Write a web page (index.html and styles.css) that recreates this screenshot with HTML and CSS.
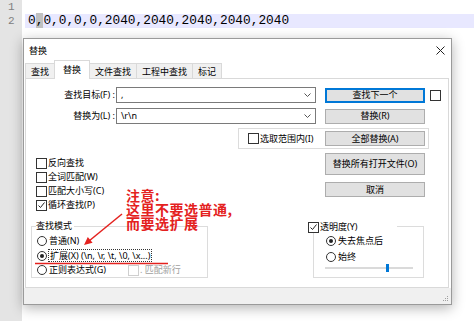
FILE: index.html
```html
<!DOCTYPE html>
<html>
<head>
    <meta charset="utf-8">
    <title>替换</title>
    <link rel="stylesheet" href="styles.css">
</head>
<body>
    <div class="editor">
        <div class="gutter">
            <div class="ln">1</div>
            <div class="ln">2</div>
        </div>
        <div class="code">
            <div class="line"></div>
            <div class="line current">0<span class="sel">,</span>0,0,0,0,2040,2040,2040,2040,2040</div>
        </div>
    </div>

    <div class="dialog">
        <div class="titlebar">
            <span>替换</span>
            <svg class="close" width="9" height="9" viewBox="0 0 9 9"><path d="M0.5 0.5L8.5 8.5M8.5 0.5L0.5 8.5" stroke="#222" stroke-width="1"/></svg>
        </div>
        <div class="tabs">
            <div class="tab">查找</div>
            <div class="tab active">替换</div>
            <div class="tab">文件查找</div>
            <div class="tab">工程中查找</div>
            <div class="tab">标记</div>
        </div>
        <div class="panel">
            <div class="row first">
                <label class="field-label">查找目标(F) :</label>
                <div class="combo">
                    <span>,</span>
                    <svg width="7" height="4" viewBox="0 0 7 4"><path d="M0.5 0.5L3.5 3.5L6.5 0.5" fill="none" stroke="#555" stroke-width="1"/></svg>
                </div>
                <div class="btn default">查找下一个</div>
                <span class="box solo"></span>
            </div>
            <div class="row">
                <label class="field-label">替换为(L) :</label>
                <div class="combo">
                    <span>\r\n</span>
                    <svg width="7" height="4" viewBox="0 0 7 4"><path d="M0.5 0.5L3.5 3.5L6.5 0.5" fill="none" stroke="#555" stroke-width="1"/></svg>
                </div>
                <div class="btn">替换(R)</div>
            </div>
            <div class="selection">
                <div class="check"><span class="box"></span>选取范围内(I)</div>
                <div class="btn">全部替换(A)</div>
            </div>

            <div class="lower">
                <div class="left-col">
                    <div class="opts">
                        <div class="check opt"><span class="box"></span>反向查找</div>
                        <div class="check opt"><span class="box"></span>全词匹配(W)</div>
                        <div class="check opt"><span class="box"></span>匹配大小写(C)</div>
                        <div class="check opt"><span class="box"><svg width="9" height="9" viewBox="0 0 9 9"><path d="M1.5 4.5L3.5 6.5L7.5 1.5" fill="none" stroke="#222" stroke-width="1"/></svg></span>循环查找(P)</div>
                    </div>
                    <fieldset class="mode">
                        <legend>查找模式</legend>
                        <div class="radio-row"><span class="radio"></span>普通(N)</div>
                        <div class="radio-row"><span class="radio on"></span><span class="focus">扩展(X) (\n, \r, \t, \0, \x...)</span></div>
                        <div class="radio-row last"><span class="radio"></span><span class="regex">正则表达式(G)</span><span class="box disabled"></span><span class="muted">. 匹配新行</span></div>
                    </fieldset>
                </div>
                <div class="right-col">
                    <div class="btn tall">替换所有打开文件(O)</div>
                    <div class="btn cancel">取消</div>
                    <div class="check trans-head"><span class="box"><svg width="9" height="9" viewBox="0 0 9 9"><path d="M1.5 4.5L3.5 6.5L7.5 1.5" fill="none" stroke="#222" stroke-width="1"/></svg></span>透明度(Y)</div>
                    <div class="trans-box">
                        <div class="radio-row"><span class="radio on"></span>失去焦点后</div>
                        <div class="radio-row"><span class="radio"></span>始终</div>
                        <div class="track"><div class="thumb"></div></div>
                    </div>
                </div>
            </div>
        </div>
        <div class="footer">
            <svg width="6" height="6" viewBox="0 0 6 6" fill="#a0a0a0">
                <rect x="4" y="0" width="1" height="1"/>
                <rect x="2" y="2" width="1" height="1"/><rect x="4" y="2" width="1" height="1"/>
                <rect x="0" y="4" width="1" height="1"/><rect x="2" y="4" width="1" height="1"/><rect x="4" y="4" width="1" height="1"/>
            </svg>
        </div>
    </div>

    <!-- red annotation drawn over the screenshot -->
    <div class="note">
        <div class="note-line">注意:</div>
        <div class="note-line">这里不要选普通,</div>
        <div class="note-line">而要选扩展</div>
    </div>
    <svg class="marks" width="474" height="321" viewBox="0 0 474 321">
        <line x1="122" y1="214" x2="89" y2="241" stroke="#e4211e" stroke-width="1.5"/>
        <polygon points="84,245 92.6,242.8 87.8,236.9" fill="#e4211e"/>
        <line x1="35" y1="263.5" x2="168" y2="263.5" stroke="#e4211e" stroke-width="1.5"/>
    </svg>
</body>
</html>
```

FILE: styles.css
```css
body {
    margin: 0;
    width: 474px;
    height: 321px;
    overflow: hidden;
    background: #fff;
    position: relative;
}

/* editor behind the dialog */
.editor {
    display: flex;
    height: 321px;
}
.gutter {
    width: 22px;
    background: #e4e4e4;
    font-family: "Liberation Mono", monospace;
    font-size: 11px;
    color: #808080;
}
.ln {
    height: 14px;
    line-height: 14px;
    padding-left: 8px;
}
.code {
    flex: 1;
    margin-left: 3px;
    font-family: "Liberation Mono", monospace;
    font-size: 12.8px;
    color: #000;
}
.line {
    height: 14px;
    line-height: 14px;
    padding-left: 3px;
    white-space: pre;
}
.line.current {
    background: #e8e8ff;
}
.sel {
    background: #c0c0c0;
}

/* dialog window */
.dialog {
    position: absolute;
    left: 23px;
    top: 38px;
    width: 429px;
    height: 267px;
    box-sizing: border-box;
    border: 1px solid #9a9a9a;
    background: #fff;
    box-shadow: 0 3px 12px rgba(0, 0, 0, 0.3);
    display: flex;
    flex-direction: column;
    font-family: "Noto Sans", "Noto Sans CJK SC", sans-serif;
    font-size: 9px;
    line-height: 12px;
    color: #000;
}
.titlebar {
    height: 21px;
    box-sizing: border-box;
    display: flex;
    align-items: center;
    justify-content: space-between;
    padding: 2px 6px 0 5px;
}
.tabs {
    height: 19px;
    display: flex;
    align-items: flex-end;
    padding-left: 1px;
    margin-bottom: -1px;
}
.tab {
    height: 16px;
    box-sizing: border-box;
    border: 1px solid #d9d9d9;
    border-bottom: none;
    background: #f0f0f0;
    padding: 0 5px;
    line-height: 15px;
    margin-left: -1px;
}
.tab:first-child {
    margin-left: 0;
}
.tab.active {
    height: 19px;
    background: #fff;
    padding: 0 8px;
    line-height: 18px;
    position: relative;
    z-index: 1;
}
.panel {
    height: 210px;
    box-sizing: border-box;
    border: 1px solid #d9d9d9;
    margin: 0 2px 0 1px;
    background: #fff;
}
.footer {
    flex: 1;
    background: #f0f0f0;
    display: flex;
    justify-content: flex-end;
    align-items: flex-end;
    padding: 0 2px 2px 0;
}

/* controls */
.row {
    display: flex;
    align-items: center;
    height: 16px;
}
.row.first {
    margin-top: 8px;
}
.row + .row {
    margin-top: 5px;
}
.field-label {
    width: 90px;
    box-sizing: border-box;
    padding-right: 1px;
    text-align: right;
    white-space: nowrap;
}
.combo {
    width: 200px;
    height: 16px;
    box-sizing: border-box;
    border: 1px solid #7a7a7a;
    display: flex;
    align-items: center;
    justify-content: space-between;
    padding: 0 4px;
}
.btn {
    width: 100px;
    height: 15px;
    box-sizing: border-box;
    border: 1px solid #adadad;
    background: #e1e1e1;
    display: flex;
    align-items: center;
    justify-content: center;
    white-space: nowrap;
}
.row .btn {
    margin-left: 9px;
}
.btn.default {
    border-color: #0078d7;
    box-shadow: inset 0 0 0 1px #0078d7;
}
.box {
    width: 11px;
    height: 11px;
    box-sizing: border-box;
    border: 1px solid #333;
    background: #fff;
    flex: none;
    display: flex;
    align-items: center;
    justify-content: center;
}
.box.solo {
    margin-left: 5px;
}
.box.disabled {
    border-color: #cfcfcf;
}
.check {
    display: flex;
    align-items: center;
    gap: 1px;
    white-space: nowrap;
}
.selection {
    margin: 4px 0 0 212px;
    width: 191px;
    height: 21px;
    box-sizing: border-box;
    border: 1px solid #dcdcdc;
    display: flex;
    align-items: center;
    padding: 0 3px 0 9px;
}
.selection .btn {
    margin-left: auto;
}

.lower {
    display: flex;
}
.left-col {
    width: 282px;
    box-sizing: border-box;
    padding: 7px 0 0 5px;
}
.opts {
    padding-left: 5px;
}
.opt {
    height: 14px;
}
.mode {
    margin: 8px 0 0 0;
    width: 177px;
    min-width: 0;
    box-sizing: border-box;
    border: 1px solid #dcdcdc;
    padding: 0 0 0 4px;
}
.mode legend {
    padding: 0 2px 0 0;
    line-height: 12px;
}
.radio-row {
    height: 15px;
    display: flex;
    align-items: center;
    padding-left: 1px;
    white-space: nowrap;
}
.mode .radio-row:first-of-type {
    margin-top: 1px;
}
.radio-row.last {
    height: 14px;
}
.radio {
    width: 10px;
    height: 10px;
    box-sizing: border-box;
    border: 1px solid #333;
    border-radius: 50%;
    margin-right: 2px;
    flex: none;
    display: flex;
    align-items: center;
    justify-content: center;
}
.radio.on::after {
    content: "";
    width: 4px;
    height: 4px;
    border-radius: 50%;
    background: #222;
}
.focus {
    height: 11px;
    line-height: 11px;
    outline: 1px dotted #333;
    padding: 0 1px;
}
.regex {
    width: 79px;
}
.muted {
    color: #a0a0a0;
    margin-left: 1px;
}

.right-col {
    flex: 1;
    padding-top: 4px;
}
.right-col .btn {
    margin-left: 17px;
}
.btn.tall {
    height: 22px;
}
.btn.cancel {
    margin-top: 7px;
}
.trans-head {
    margin-top: 24px;
    width: 89px;
    height: 12px;
    background: #fff;
    position: relative;
    z-index: 1;
}
.trans-box {
    margin: -7px 0 0 5px;
    width: 111px;
    height: 52px;
    box-sizing: border-box;
    border: 1px solid #dcdcdc;
    padding: 6px 0 0 11px;
}
.trans-box .radio-row + .radio-row {
    margin-top: 1px;
}
.track {
    width: 88px;
    height: 8px;
    background: linear-gradient(to bottom, transparent 3px, #dadada 3px, #dadada 5px, transparent 5px);
}
.thumb {
    margin-left: 61px;
    width: 3px;
    height: 8px;
    background: #0078d7;
}

/* annotation */
.note {
    position: absolute;
    left: 126px;
    top: 188px;
    color: #e4211e;
    font-family: "Noto Sans CJK SC", sans-serif;
    font-weight: bold;
    font-size: 14px;
    white-space: nowrap;
}
.note-line {
    height: 14px;
    line-height: 14px;
    letter-spacing: 0.5px;
}
.marks {
    position: absolute;
    left: 0;
    top: 0;
    pointer-events: none;
}
```
